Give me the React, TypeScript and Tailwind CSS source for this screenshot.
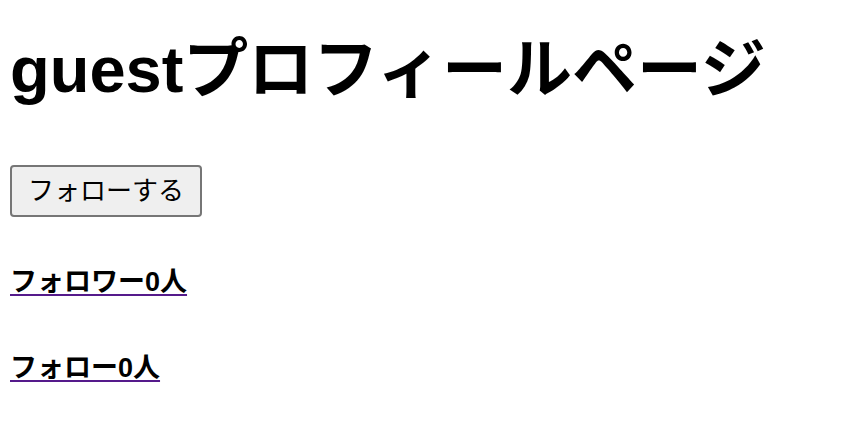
import React from "react";

const font = { fontFamily: '"Liberation Sans", "Noto Sans CJK JP", sans-serif' };

export default function App() {
  return (
    <div className="px-[10px] pb-10 bg-white text-black" style={font}>
      <h1 className="mt-[38px] text-[65px] leading-[64px] font-bold">
        guestプロフィールページ
      </h1>
      <button className="mt-[63px] h-[52px] px-[16px] text-[26px] leading-none bg-[#efefef] border-2 border-[#767676] rounded-[4px]">
        フォローする
      </button>
      <a href="#" className="block w-fit mt-[52px] underline decoration-[#551a8b] decoration-2 underline-offset-[3px]">
        <h3 className="text-[27px] leading-[26px] font-bold text-black">フォロワー0人</h3>
      </a>
      <a href="#" className="block w-fit mt-[60px] underline decoration-[#551a8b] decoration-2 underline-offset-[3px]">
        <h3 className="text-[27px] leading-[26px] font-bold text-black">フォロー0人</h3>
      </a>
    </div>
  );
}
